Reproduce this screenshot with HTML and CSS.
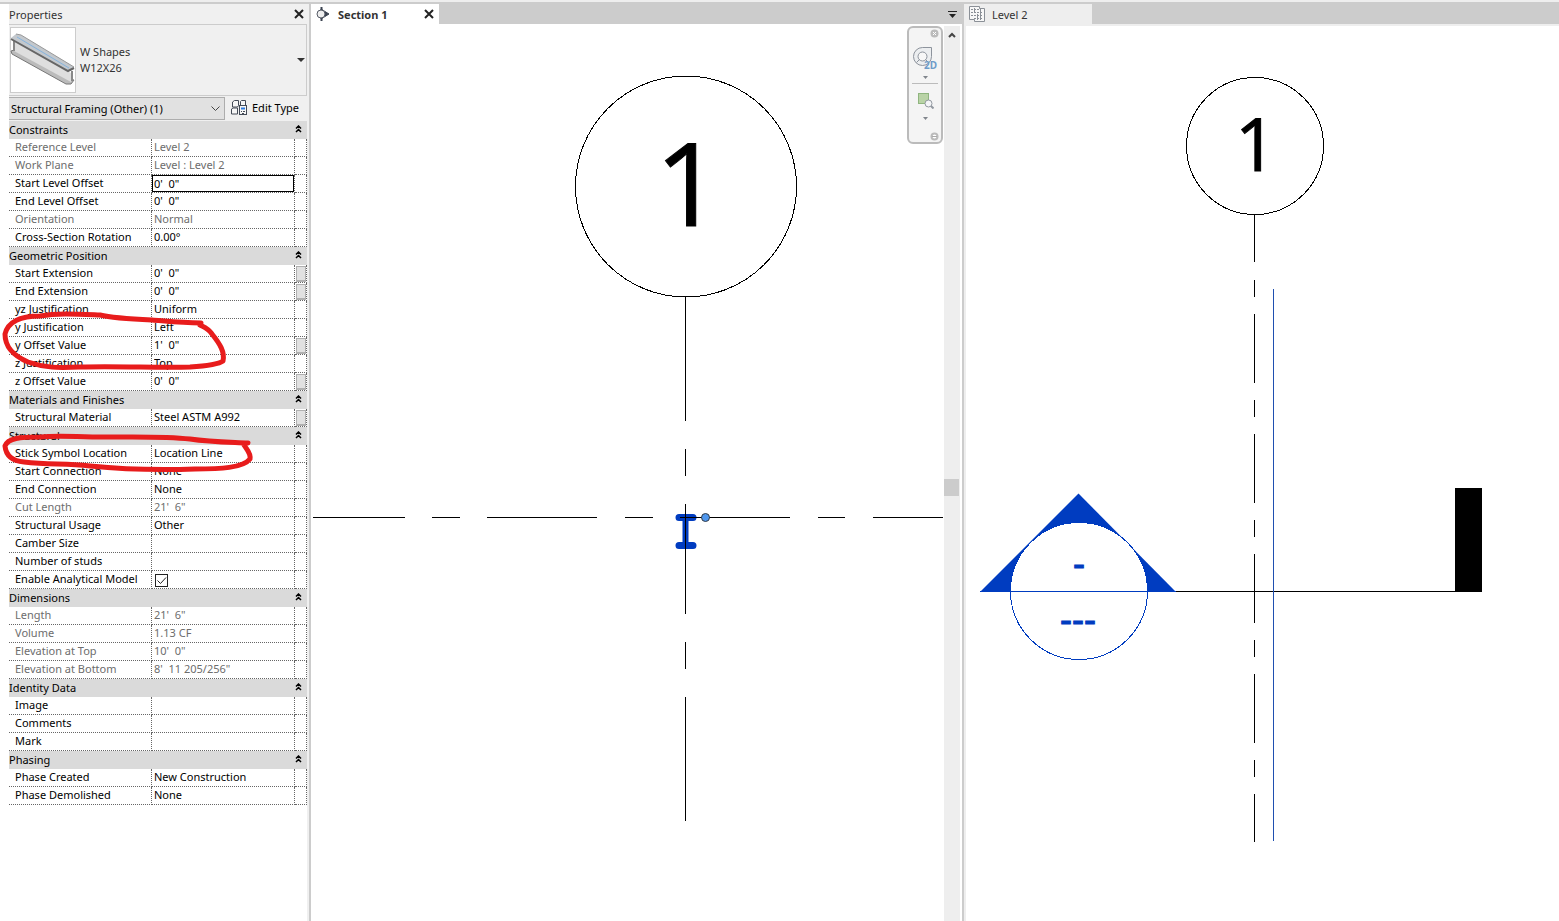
FILE: index.html
```html
<!DOCTYPE html>
<html lang="en">
<head>
  <meta charset="UTF-8" />
  <title>Section 1</title>
  <link rel="stylesheet" href="styles.css">
</head>
<body>

  <div class="app">

    <!-- Properties palette -->
    <aside class="palette">
      <header class="palette-title">
        <h1>Properties</h1>
        <button class="close" aria-label="Close Properties">
          <svg width="10" height="10" viewBox="0 0 10 10"><path d="M1 1l8 8M9 1l-8 8" /></svg>
        </button>
      </header>

      <button class="type-selector">
        <svg class="thumb" width="66" height="66" viewBox="0 0 66 66">
          <rect x="0.500" y="0.500" width="65" height="65" fill="#fff" stroke="#ccc" />
          <path d="M1 24l3-1 56 29 4 1-3 4-5 0L2 27z" fill="#bbb" stroke="#777" />
          <path d="M4 14l57 32v9L4 24z" fill="#dedede" />
          <path d="M4 14v10M62 44v10" stroke="#888" stroke-width="2" />
          <path d="M1 11l5-4 5 1 53 32-1 3-5 1L2 13z" fill="#c3c8cd" />
          <path d="M6 7l5 1 53 32" stroke="#999" fill="none" />
          <path d="M1 12l57 32 6-3" stroke="#666" stroke-width="2" fill="none" />
          <path d="M7 10l52 31" stroke="#86b4de" fill="none" />
        </svg>
        <span class="type-name">W Shapes<br>W12X26</span>
        <svg class="drop" width="8" height="4" viewBox="0 0 8 4"><path d="M0 0h8L4 4z" /></svg>
      </button>

      <div class="filter-row">
        <select class="filter" aria-label="Category filter">
          <option>Structural Framing (Other) (1)</option>
        </select>
        <button class="edit-type">
          <svg width="16" height="17" viewBox="0 0 16 17" fill="#f6f6f6" stroke="#444b57">
            <path d="M1.500 3l2-1.500h4v5l-1 1.500h-5zM9.500 2.500l1-1h4v5l-1 1h-4z" />
            <path d="M0.500 10l1.500-1h4.500v6H0.500z" />
            <rect x="8.500" y="6.500" width="7" height="9" />
            <path d="M10 9.500h4" stroke="#2d7be0" stroke-width="2" />
            <path d="M10 12.500h1M12 12.500h2M11 14.500h2" />
          </svg>
          Edit Type
        </button>
      </div>

      <table class="props">
        <colgroup><col class="c-name"><col><col class="c-btn"></colgroup>
        <tbody>
          <tr class="group"><th colspan="2">Constraints</th><td><button class="fold" aria-label="Collapse Constraints"><svg width="7" height="8"><use href="#chev" /></svg></button></td></tr>
          <tr class="ro"><th>Reference Level</th><td>Level 2</td><td></td></tr>
          <tr class="ro"><th>Work Plane</th><td>Level : Level 2</td><td></td></tr>
          <tr><th><label for="p-slo">Start Level Offset</label></th><td><input class="current" id="p-slo" value="0'  0&quot;"></td><td></td></tr>
          <tr><th><label for="p-elo">End Level Offset</label></th><td><input id="p-elo" value="0'  0&quot;"></td><td></td></tr>
          <tr class="ro"><th>Orientation</th><td>Normal</td><td></td></tr>
          <tr><th><label for="p-rot">Cross-Section Rotation</label></th><td><input id="p-rot" value="0.00°"></td><td></td></tr>

          <tr class="group"><th colspan="2">Geometric Position</th><td><button class="fold" aria-label="Collapse Geometric Position"><svg width="7" height="8"><use href="#chev" /></svg></button></td></tr>
          <tr><th><label for="p-se">Start Extension</label></th><td><input id="p-se" value="0'  0&quot;"></td><td><button class="assoc" aria-label="Associate Start Extension"></button></td></tr>
          <tr><th><label for="p-ee">End Extension</label></th><td><input id="p-ee" value="0'  0&quot;"></td><td><button class="assoc" aria-label="Associate End Extension"></button></td></tr>
          <tr><th><label for="p-yz">yz Justification</label></th><td><input id="p-yz" value="Uniform"></td><td></td></tr>
          <tr><th><label for="p-yj">y Justification</label></th><td><input id="p-yj" value="Left"></td><td></td></tr>
          <tr><th><label for="p-yo">y Offset Value</label></th><td><input id="p-yo" value="1'  0&quot;"></td><td><button class="assoc" aria-label="Associate y Offset Value"></button></td></tr>
          <tr><th><label for="p-zj">z Justification</label></th><td><input id="p-zj" value="Top"></td><td></td></tr>
          <tr><th><label for="p-zo">z Offset Value</label></th><td><input id="p-zo" value="0'  0&quot;"></td><td><button class="assoc" aria-label="Associate z Offset Value"></button></td></tr>

          <tr class="group"><th colspan="2">Materials and Finishes</th><td><button class="fold" aria-label="Collapse Materials and Finishes"><svg width="7" height="8"><use href="#chev" /></svg></button></td></tr>
          <tr><th><label for="p-mat">Structural Material</label></th><td><input id="p-mat" value="Steel ASTM A992"></td><td><button class="assoc" aria-label="Associate Structural Material"></button></td></tr>

          <tr class="group"><th colspan="2">Structural</th><td><button class="fold" aria-label="Collapse Structural"><svg width="7" height="8"><use href="#chev" /></svg></button></td></tr>
          <tr><th><label for="p-ssl">Stick Symbol Location</label></th><td><input id="p-ssl" value="Location Line"></td><td></td></tr>
          <tr><th><label for="p-sc">Start Connection</label></th><td><input id="p-sc" value="None"></td><td></td></tr>
          <tr><th><label for="p-ec">End Connection</label></th><td><input id="p-ec" value="None"></td><td></td></tr>
          <tr class="ro"><th>Cut Length</th><td>21'  6"</td><td></td></tr>
          <tr><th><label for="p-su">Structural Usage</label></th><td><input id="p-su" value="Other"></td><td></td></tr>
          <tr><th><label for="p-cs">Camber Size</label></th><td><input id="p-cs"></td><td></td></tr>
          <tr><th><label for="p-ns">Number of studs</label></th><td><input id="p-ns"></td><td></td></tr>
          <tr><th><label for="p-am">Enable Analytical Model</label></th><td><input type="checkbox" id="p-am" checked></td><td></td></tr>

          <tr class="group"><th colspan="2">Dimensions</th><td><button class="fold" aria-label="Collapse Dimensions"><svg width="7" height="8"><use href="#chev" /></svg></button></td></tr>
          <tr class="ro"><th>Length</th><td>21'  6"</td><td></td></tr>
          <tr class="ro"><th>Volume</th><td>1.13 CF</td><td></td></tr>
          <tr class="ro"><th>Elevation at Top</th><td>10'  0"</td><td></td></tr>
          <tr class="ro"><th>Elevation at Bottom</th><td>8'  11 205/256"</td><td></td></tr>

          <tr class="group"><th colspan="2">Identity Data</th><td><button class="fold" aria-label="Collapse Identity Data"><svg width="7" height="8"><use href="#chev" /></svg></button></td></tr>
          <tr><th><label for="p-img">Image</label></th><td><input id="p-img"></td><td></td></tr>
          <tr><th><label for="p-com">Comments</label></th><td><input id="p-com"></td><td></td></tr>
          <tr><th><label for="p-mark">Mark</label></th><td><input id="p-mark"></td><td></td></tr>

          <tr class="group"><th colspan="2">Phasing</th><td><button class="fold" aria-label="Collapse Phasing"><svg width="7" height="8"><use href="#chev" /></svg></button></td></tr>
          <tr><th><label for="p-pc">Phase Created</label></th><td><input id="p-pc" value="New Construction"></td><td></td></tr>
          <tr><th><label for="p-pd">Phase Demolished</label></th><td><input id="p-pd" value="None"></td><td></td></tr>
        </tbody>
      </table>

      <!-- Red pen marks -->
      <svg class="markup" width="260" height="480" viewBox="0 0 260 480">
        <path d="M201 323C180 323 165 321 152 320C130 319 112 318 100 315C75 314 58 313 40 316C20 316 8 322 5 334C5 348 14 356 28 362C45 368 58 368 80 367C120 366 160 368 190 367C205 366 219 364 223 361C225 352 220 344 212 334C208 328 204 327 200 325" />
        <path d="M248 443C225 442 210 442 190 439C165 436 130 437 105 437C75 437 60 435 40 437C20 437 8 438 5 446C6 456 12 461 24 462C50 465 65 463 90 466C130 470 165 470 195 469C220 469 243 468 250 459C251 453 247 450 244 445" />
      </svg>
    </aside>

    <!-- Section 1 view -->
    <section class="view view-section">
      <nav class="tabs">
        <a class="tab active" href="#section">
          <svg width="14" height="14" viewBox="0 0 14 14">
            <path d="M5.500 0v14" stroke="#3b4250" stroke-width="2" />
            <path d="M5 2l8 5-8 5z" fill="#3b4250" stroke="#3b4250" />
            <circle cx="5" cy="7" r="4" fill="#eee" stroke="#555b66" />
          </svg>
          Section 1
        </a>
        <button class="close" aria-label="Close Section 1">
          <svg width="10" height="10" viewBox="0 0 10 10"><path d="M1 1l8 8M9 1l-8 8" /></svg>
        </button>
        <button class="tab-list" aria-label="View list">
          <svg width="9" height="7" viewBox="0 0 9 7"><path d="M0 0h9v1H0zM1 3h7L4.500 7z" /></svg>
        </button>
      </nav>
      <div class="canvas-row" id="section">
        <svg class="canvas">
          <g class="thin">
            <circle cx="375" cy="162.500" r="110.500" />
            <path d="M374.500 273V397M374.500 425V452M374.500 618V645M374.500 673V797" />
            <path d="M2 493.500H94M121 493.500H149M176 493.500H286M314 493.500H342M507 493.500H534M562 493.500H632" />
          </g>
          <text class="bubble big" x="344" y="202">1</text>
          <path class="beam" d="M368 493.500H382M368 521.500H382" />
          <path class="beam web" d="M374.500 493V521" />
          <path class="thin" d="M374.500 480V590M369 493.500H479" />
          <circle cx="394.500" cy="493.500" r="4" fill="#4f97ee" stroke="#333b46" />
        </svg>

        <!-- Navigation bar -->
        <div class="navbar">
          <button class="nav-end" aria-label="Close navigation bar">
            <svg width="9" height="9" viewBox="0 0 9 9"><circle cx="4.500" cy="4.500" r="4" fill="#bbb" /><path d="M3 3l3 3M6 3L3 6" stroke="#fff" /></svg>
          </button>
          <button class="nav-tool" aria-label="Steering wheel 2D">
            <svg width="26" height="25" viewBox="0 0 26 25">
              <path d="M10.500 1.500h9v9a9 9 0 1 1-9-9z" fill="#eceef0" stroke="#8d939c" />
              <circle cx="10.500" cy="10.500" r="4.500" fill="#f7f7f7" stroke="#8d939c" />
              <path d="M7.500 13.500l-3 3M13.500 13.500l3 3" stroke="#8d939c" />
              <text class="nav-text" x="12" y="23">2D</text>
            </svg>
          </button>
          <button class="nav-more" aria-label="Wheel options"><svg width="5" height="3"><path d="M0 0h5L2.500 3z" fill="#80858c" /></svg></button>
          <hr>
          <button class="nav-tool" aria-label="Zoom region">
            <svg width="17" height="17" viewBox="0 0 17 17">
              <rect x="1.500" y="1.500" width="10" height="10" fill="#b9d3a6" stroke="#8fb57f" />
              <circle cx="11.500" cy="11.500" r="3.500" fill="#f4f5f7" stroke="#9298a0" />
              <path d="M14 14l2.500 2.500" stroke="#9298a0" stroke-width="2" />
            </svg>
          </button>
          <button class="nav-tool" aria-label="Zoom options"><svg width="5" height="3"><path d="M0 0h5L2.500 3z" fill="#80858c" /></svg></button>
          <button class="nav-end nav-last" aria-label="Minimize navigation bar">
            <svg width="9" height="9" viewBox="0 0 9 9"><circle cx="4.500" cy="4.500" r="4" fill="#bbb" /><circle cx="4.500" cy="4.500" r="2" fill="#fff" /><path d="M2 4.500h5" stroke="#aaa" /></svg>
          </button>
        </div>

        <div class="scrollbar">
          <svg class="up" width="8" height="6" viewBox="0 0 8 6"><path d="M1 5l3-3 3 3" /></svg>
          <div class="scroll-thumb"></div>
        </div>
      </div>
    </section>

    <!-- Level 2 view -->
    <section class="view view-plan">
      <nav class="tabs">
        <a class="tab" href="#plan">
          <svg width="16" height="16" viewBox="0 0 16 16" fill="#f8f8f8" stroke="#8b9097">
            <path d="M0.500 0.500h10v2h5v13h-10v-2h-5z" />
            <path d="M2 3.500h8M2 6.500h12M2 9.500h12M5 12.500h9" stroke-dasharray="2 1" />
            <path d="M5.500 2v5M8.500 8v6M11.500 3v11" />
          </svg>
          Level 2
        </a>
      </nav>
      <div class="canvas-row" id="plan">
        <svg class="canvas">
          <g class="thin">
            <circle cx="289" cy="120" r="68.500" />
            <path d="M288.500 188V236M288.500 254V271M288.500 288V357M288.500 374V391M288.500 408V477M288.500 494V511M288.500 528V597M288.500 614V631M288.500 648V717M288.500 734V751M288.500 768V816" />
            <path d="M209 565.500H490" />
          </g>
          <text class="bubble small" x="269" y="145">1</text>
          <path class="stick" d="M307.500 263V815" />
          <rect x="489" y="462" width="27" height="104" />
          <path class="marker" d="M112.500 467.500L210 566H14z" />
          <circle class="marker-ring" cx="113" cy="565" r="68.500" />
          <path class="marker-line" d="M14 565.500H210" />
          <text class="marker-text" x="113" y="550">-</text>
          <text class="marker-text" x="112" y="606">---</text>
        </svg>
      </div>
    </section>

  </div>

  <svg class="defs">
    <symbol id="chev" viewBox="0 0 7 8"><path d="M1 3.500L3.500 1L6 3.500M1 7L3.500 4.500L6 7" fill="none" stroke="#000" stroke-width="1.500" /></symbol>
  </svg>

</body>
</html>
```
FILE: styles.css
```css
* {
  box-sizing: border-box;
}
html, body {
  margin: 0;
  height: 100%;
  background: #fff;
  color: #000;
  font-family: "Noto Sans", "Open Sans", sans-serif;
  font-size: 11px;
}
button, input, select {
  margin: 0;
  padding: 0;
  border: 0;
  background: none;
  color: inherit;
  font: inherit;
}
svg {
  display: block;
  flex: none;
}
.app {
  display: flex;
  min-height: 100%;
  border-top: 2px solid #eee;
}
.defs {
  display: none;
}

/* Properties palette */
.palette {
  position: relative;
  flex: none;
  width: 311px;
  padding-left: 9px;
  padding-right: 2px;
  border-top: 2px solid #ccc;
  border-right: 2px solid #ccc;
  background: linear-gradient(#fff, #fff) 0 0 / 9px 100% no-repeat, #f0f0f0;
  display: flex;
  flex-direction: column;
}
.palette::after {
  content: "";
  flex: 1;
  background: #fff;
}
.palette-title {
  display: flex;
  justify-content: space-between;
  align-items: center;
  height: 20px;
  padding-right: 3px;
  color: #333;
}
.palette-title h1 {
  margin: 0;
  font-size: 11px;
  font-weight: 400;
}
.close path {
  fill: none;
  stroke: #222;
  stroke-width: 2;
}
.type-selector {
  display: flex;
  align-items: center;
  gap: 4px;
  height: 72px;
  border: 1px solid #ccc;
  border-left: 0;
  padding: 0 1px;
  color: #333;
  text-align: left;
  line-height: 16px;
}
.type-name {
  flex: 1;
}
.drop {
  fill: #333;
}
.filter-row {
  display: flex;
  align-items: center;
  gap: 6px;
  height: 25px;
}
.filter {
  appearance: none;
  width: 216px;
  height: 23px;
  padding-left: 2px;
  border: 1px solid #adadad;
  border-left: 0;
  background: #e1e1e1 url("data:image/svg+xml,%3Csvg xmlns='http://www.w3.org/2000/svg' width='9' height='6'%3E%3Cpath d='M0.500 0.500L4.500 4.500L8.500 0.500' fill='none' stroke='%23444'/%3E%3C/svg%3E") right 4px center no-repeat;
}
.edit-type {
  display: flex;
  align-items: center;
  gap: 5px;
  padding-bottom: 3px;
}

/* Parameter grid */
.props {
  width: 298px;
  table-layout: fixed;
  border-spacing: 0;
  background: #fff;
}
.c-name {
  width: 143px;
}
.c-btn {
  width: 12px;
}
.props tr {
  height: 18px;
}
.props th, .props td {
  height: 18px;
  padding: 0 0 2px 2px;
  border-right: 1px dotted #666;
  border-bottom: 1px dotted #666;
  font-weight: 400;
  line-height: 15px;
  text-align: left;
  white-space: pre;
}
.props th {
  padding-left: 6px;
}
.props td:last-child {
  padding: 0;
}
.props .group th, .props .group td {
  padding: 0 0 2px;
  border: 0;
  background: #dadada;
}
.ro {
  color: #6d6d6d;
}
.props td:has(input) {
  padding: 0;
}
.props td input {
  display: block;
  width: 100%;
  height: 17px;
  padding: 0 0 2px 2px;
}
.props td .current {
  padding: 0 0 1px 2px;
  border: 0;
  outline: 1px solid #000;
  outline-offset: -1px;
}
.props input[type="checkbox"] {
  appearance: none;
  width: 13px;
  height: 13px;
  margin: 2px 0 0 3px;
  padding: 0;
  border: 1px solid #222;
}
.props input[type="checkbox"]:checked {
  background: url("data:image/svg+xml,%3Csvg xmlns='http://www.w3.org/2000/svg' width='11' height='11'%3E%3Cpath d='M1.500 5.500L4.500 8.500L10 2.500' fill='none' stroke='%23222'/%3E%3C/svg%3E") center no-repeat;
}
.fold {
  display: block;
  margin-right: auto;
}
.assoc {
  display: block;
  width: 10px;
  height: 16px;
  margin-left: 1px;
  border: 1px solid #b0b0b0;
  border-bottom-width: 2px;
  background: #e1e1e1;
}
.markup {
  position: absolute;
  left: 0;
  top: -4px;
  pointer-events: none;
  fill: none;
  stroke: #e81c1c;
  stroke-width: 5;
  stroke-linecap: round;
  stroke-linejoin: round;
}

/* Views */
.view {
  display: flex;
  flex-direction: column;
  min-width: 0;
  border-top: 2px solid #ccc;
}
.view-section {
  flex: 651;
  border-right: 2px solid #ccc;
}
.view-plan {
  flex: 595;
}
.tabs {
  display: flex;
  height: 20px;
  background: #ccc;
}
.view-plan .tabs {
  height: 22px;
  border-bottom: 2px solid #eee;
}
.tab {
  display: flex;
  align-items: center;
  gap: 7px;
  width: 128px;
  padding-left: 5px;
  background: #eee;
  color: #333;
  text-decoration: none;
}
.tab.active {
  gap: 8px;
  width: 112px;
  background: #fff;
  font-weight: 700;
}
.tabs .close {
  width: 16px;
  padding-left: 1px;
  background: #fff;
}
.tab-list {
  margin-left: auto;
  padding-right: 5px;
  fill: #222;
}
.canvas-row {
  position: relative;
  flex: 1;
  display: flex;
}
.view-plan .canvas-row {
  border-left: 2px solid #eee;
}
.canvas {
  flex: 1;
  min-width: 0;
  height: 100%;
}
.thin {
  fill: none;
  stroke: #000;
  shape-rendering: crispEdges;
}
.bubble {
  stroke: #000;
  font-family: "Open Sans", sans-serif;
}
.big {
  font-size: 116px;
}
.small {
  font-size: 73px;
}
.beam {
  fill: none;
  stroke: #003cc0;
  stroke-width: 7;
  stroke-linecap: round;
}
.web {
  stroke-width: 6;
}
.stick {
  stroke: #1f4fb0;
}
.marker {
  fill: #003cc0;
}
.marker-ring {
  fill: #fff;
  stroke: #003cc0;
  shape-rendering: crispEdges;
}
.marker-line {
  stroke: #003cc0;
}
.marker-text {
  fill: #003cc0;
  stroke: #003cc0;
  font-family: "Liberation Sans", sans-serif;
  font-size: 36px;
  text-anchor: middle;
}

/* Navigation bar floats over the drawing */
.navbar {
  position: absolute;
  top: 2px;
  right: 19px;
  width: 36px;
  height: 118px;
  padding: 1px 2px;
  border: 2px solid #bbb;
  border-radius: 6px;
  background: #f4f4f4;
  display: flex;
  flex-direction: column;
  align-items: center;
}
.navbar hr {
  width: 26px;
  margin: 4px 0 0;
  border: 0;
  border-top: 1px solid #bbb;
}
.nav-end {
  align-self: flex-end;
}
.nav-tool {
  margin-top: 8px;
}
.nav-more {
  margin-top: 5px;
}
.nav-last {
  margin-top: auto;
}
.nav-text {
  fill: #6f9cc9;
  font-size: 10px;
  font-weight: 700;
}
.scrollbar {
  width: 16px;
  margin: 2px 2px 0 0;
  background: #eee;
}
.up {
  margin: 6px auto 0 4px;
  fill: none;
  stroke: #444;
  stroke-width: 2;
}
.scroll-thumb {
  width: 15px;
  height: 17px;
  margin-top: 441px;
  background: #ccc;
}
```
